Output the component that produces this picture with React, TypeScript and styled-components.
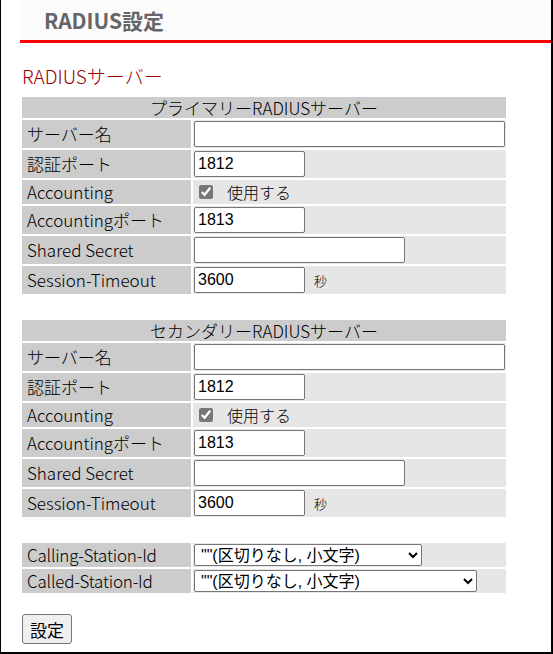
import styled, { createGlobalStyle } from "styled-components";

const GlobalStyle = createGlobalStyle`
  html, body {
    margin: 0;
    padding: 0;
    background: #ffffff;
  }
`;

const servers = ["プライマリーRADIUSサーバー", "セカンダリーRADIUSサーバー"];

const stationOptions = [
  "\"\"(区切りなし, 小文字)",
  "\"\"(区切りなし, 大文字)",
  "\":\"(小文字)",
  "\"-\"(小文字)",
];

function ServerTable({ title }: { title: string }) {
  return (
    <Table>
      <colgroup>
        <col style={{ width: 169 }} />
        <col />
      </colgroup>
      <tbody>
        <tr>
          <HeadCell colSpan={2}>{title}</HeadCell>
        </tr>
        <tr>
          <Label>サーバー名</Label>
          <Value>
            <Field $h={26}>
              <TextInput $w={311} defaultValue="" />
            </Field>
          </Value>
        </tr>
        <tr>
          <Label>認証ポート</Label>
          <Value>
            <Field $h={26}>
              <TextInput $w={111} defaultValue="1812" />
            </Field>
          </Value>
        </tr>
        <tr>
          <Label>Accounting</Label>
          <Value>
            <Field $h={22}>
              <Check>
                <input type="checkbox" defaultChecked />
                <span>使用する</span>
              </Check>
            </Field>
          </Value>
        </tr>
        <tr>
          <Label>Accountingポート</Label>
          <Value>
            <Field $h={26}>
              <TextInput $w={111} defaultValue="1813" />
            </Field>
          </Value>
        </tr>
        <tr>
          <Label>Shared Secret</Label>
          <Value>
            <Field $h={26}>
              <TextInput $w={211} type="text" defaultValue="" />
            </Field>
          </Value>
        </tr>
        <tr>
          <Label>Session-Timeout</Label>
          <Value>
            <Field $h={26}>
              <TextInput $w={111} defaultValue="3600" />
              <Unit>秒</Unit>
            </Field>
          </Value>
        </tr>
      </tbody>
    </Table>
  );
}

function App() {
  return (
    <Frame>
      <GlobalStyle />
      <Header>
        <h1>RADIUS設定</h1>
      </Header>
      <SectionTitle>RADIUSサーバー</SectionTitle>
      {servers.map((s) => (
        <ServerTable title={s} key={s} />
      ))}
      <Table>
        <colgroup>
          <col style={{ width: 169 }} />
          <col />
        </colgroup>
        <tbody>
          <tr>
            <Label $tight>Calling-Station-Id</Label>
            <Value>
              <Field $h={22}>
                <Select $w={228} defaultValue={stationOptions[0]}>
                  {stationOptions.map((o) => (
                    <option key={o}>{o}</option>
                  ))}
                </Select>
              </Field>
            </Value>
          </tr>
          <tr>
            <Label $tight>Called-Station-Id</Label>
            <Value>
              <Field $h={22}>
                <Select $w={283} defaultValue={stationOptions[0]}>
                  {stationOptions.map((o) => (
                    <option key={o}>{o}</option>
                  ))}
                </Select>
              </Field>
            </Value>
          </tr>
        </tbody>
      </Table>
      <SubmitButton type="button">設定</SubmitButton>
    </Frame>
  );
}

const Frame = styled.div`
  width: 553px;
  height: 654px;
  box-sizing: border-box;
  border-left: 1px solid #000;
  border-right: 2px solid #000;
  border-bottom: 2px solid #000;
  padding-left: 19px;
  overflow: hidden;
  font-family: "Noto Sans CJK JP", "Noto Sans", sans-serif;
  color: #000;
`;

const Header = styled.header`
  height: 40px;
  background-color: #fbfbfb;
  border-bottom: 3px solid #ff0000;
  padding-left: 24px;
  display: flex;
  align-items: center;

  h1 {
    margin: 0;
    font-size: 21px;
    font-weight: 700;
    color: #666666;
    line-height: 24px;
  }
`;

const SectionTitle = styled.h2`
  margin: 21px 0 7px 2px;
  font-size: 19px;
  font-weight: 300;
  line-height: 24px;
  color: #990000;
`;

const Table = styled.table`
  width: 488px;
  table-layout: fixed;
  border-spacing: 2px;
  border-collapse: separate;
  margin-bottom: 22px;
  font-size: 17px;
  font-weight: 300;
`;

const HeadCell = styled.th`
  height: 21px;
  padding: 0;
  background-color: #cccccc;
  font-weight: 300;
  line-height: 21px;
  text-align: center;
  white-space: nowrap;
`;

const Label = styled.td<{ $tight?: boolean }>`
  padding: 0 0 0 5px;
  background-color: #cccccc;
  line-height: 20px;
  white-space: nowrap;
  overflow: hidden;
  vertical-align: middle;
  letter-spacing: ${(p) => (p.$tight ? "-0.2px" : "0")};
`;

const Value = styled.td`
  padding: 1px;
  background-color: #e6e6e6;
  vertical-align: middle;
  white-space: nowrap;
`;

const Field = styled.div<{ $h: number }>`
  display: flex;
  align-items: center;
  height: ${(p) => p.$h}px;
`;

const TextInput = styled.input<{ $w: number }>`
  box-sizing: border-box;
  width: ${(p) => p.$w}px;
  height: 26px;
  margin: 0;
  padding: 1px 3px;
  border: 1px solid #767676;
  border-radius: 2px;
  background: #ffffff;
  font-family: "Liberation Sans", "Noto Sans CJK JP", sans-serif;
  font-size: 16px;
  color: #000;
`;

const Check = styled.label`
  display: flex;
  align-items: center;

  input {
    width: 14px;
    height: 14px;
    margin: 0 0 0 5px;
    accent-color: #777777;
  }

  span {
    margin-left: 14px;
    font-size: 16px;
    line-height: 20px;
  }
`;

const Unit = styled.span`
  margin-left: 9px;
  font-size: 13px;
`;

const Select = styled.select<{ $w: number }>`
  box-sizing: border-box;
  width: ${(p) => p.$w}px;
  height: 22px;
  margin: 0;
  padding: 0 0 0 2px;
  border: 1px solid #767676;
  border-radius: 2px;
  background: #ffffff;
  font-family: "Liberation Sans", "Noto Sans CJK JP", sans-serif;
  font-size: 16px;
  color: #000;
`;

const SubmitButton = styled.button`
  display: block;
  width: 50px;
  height: 30px;
  margin: -3px 0 0 2px;
  padding: 0;
  background-color: #efefef;
  border: 1px solid #767676;
  border-radius: 3px;
  font-family: "Noto Sans CJK JP", sans-serif;
  font-size: 17px;
  color: #000;
`;

export default App;
